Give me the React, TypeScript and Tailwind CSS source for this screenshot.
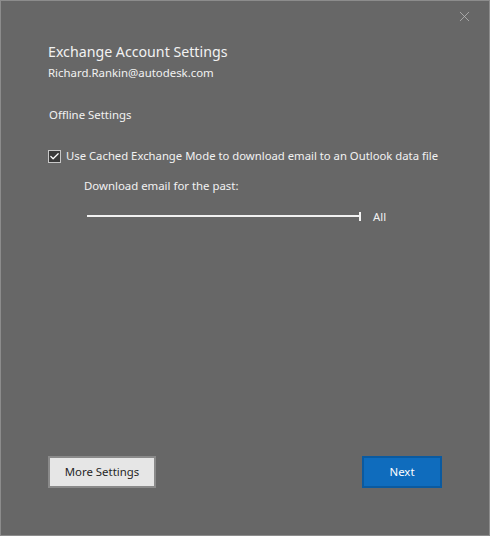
import { X, Check } from "lucide-react";

function App(): JSX.Element {
  return (
    <div className="w-[490px] h-[536px] bg-[#676767] border border-[#8c8c8c] flex flex-col font-['Noto_Sans',sans-serif] text-[#f2f2f2] relative">
      <button className="absolute top-[7px] right-[16px] text-[#b8b8b8]">
        <X size={17} strokeWidth={1.1} />
      </button>
      <div className="pl-[47px] pt-[41px] flex flex-col">
        <h1 className="text-[14.2px] leading-[20px]">Exchange Account Settings</h1>
        <p className="text-[11.4px] leading-[16px] mt-[3px]">Richard.Rankin@autodesk.com</p>
        <p className="text-[11.4px] leading-[16px] mt-[26px] pl-[1px]">Offline Settings</p>
        <label className="flex items-center gap-[5px] mt-[25px] text-[11.3px] leading-[16px]">
          <span className="w-[13px] h-[13px] border border-[#c8c8c8] bg-[#3a3a3a] flex items-center justify-center">
            <Check size={11} strokeWidth={2.6} className="text-white" />
          </span>
          Use Cached Exchange Mode to download email to an Outlook data file
        </label>
        <div className="pl-[36px] mt-[14px] flex flex-col">
          <p className="text-[11.4px] leading-[16px]">Download email for the past:</p>
          <div className="flex items-center mt-[14px] h-[16px]">
            <div className="ml-[3px] w-[272px] h-[2px] bg-[#f2f2f2]" />
            <div className="w-[2px] h-[9px] bg-[#f2f2f2]" />
            <span className="ml-[12px] text-[11.4px] mt-[2px]">All</span>
          </div>
        </div>
      </div>
      <div className="mt-auto mb-[47px] px-[47px] flex justify-between">
        <button className="w-[108px] h-[32px] bg-[#e6e6e6] border-2 border-[#8a8a8a] text-[#262626] text-[11.4px]">
          More Settings
        </button>
        <button className="w-[80px] h-[32px] bg-[#0f6cbd] border-2 border-[#0a5aa0] text-white text-[11.4px]">
          Next
        </button>
      </div>
    </div>
  );
}

export default App;
